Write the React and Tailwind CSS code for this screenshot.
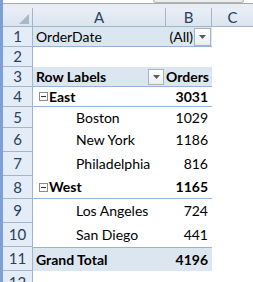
import React from "react";

const rowsData = [
  { n: 1, h: "h-[20px]", kind: "filter" },
  { n: 2, h: "h-[20px]", kind: "blank" },
  { n: 3, h: "h-[20px]", kind: "header" },
  { n: 4, h: "h-[20px]", kind: "group", label: "East", val: "3031" },
  { n: 5, h: "h-[21px]", kind: "item", label: "Boston", val: "1029" },
  { n: 6, h: "h-[24px]", kind: "item", label: "New York", val: "1186" },
  { n: 7, h: "h-[24px]", kind: "item", label: "Philadelphia", val: "816" },
  { n: 8, h: "h-[23px]", kind: "group", label: "West", val: "1165" },
  { n: 9, h: "h-[24px]", kind: "item", label: "Los Angeles", val: "724" },
  { n: 10, h: "h-[24px]", kind: "item", label: "San Diego", val: "441" },
  { n: 11, h: "h-[24px]", kind: "total", label: "Grand Total", val: "4196" },
  { n: 12, h: "h-[24px]", kind: "blank" },
];

function DropBtn({ className = "" }) {
  return (
    <div
      className={
        "flex items-center justify-center border border-[#a9b3bf] bg-gradient-to-b from-[#ffffff] to-[#e9edf2] " +
        className
      }
    >
      <svg width="7" height="4" viewBox="0 0 7 4">
        <path d="M0 0 L7 0 L3.5 4 Z" fill="#555b63" />
      </svg>
    </div>
  );
}

function Minus() {
  return (
    <div className="flex h-[9px] w-[9px] items-center justify-center border border-[#8c8c8c] bg-white">
      <div className="h-px w-[5px] bg-[#333]" />
    </div>
  );
}

function Row({ r }) {
  const fill =
    r.kind === "filter" || r.kind === "header" || r.kind === "total"
      ? "bg-[#dce6f1]"
      : "bg-white";
  let bottom = "";
  if (r.kind === "filter" || r.kind === "header" || r.kind === "group")
    bottom = "border-b border-[#95b3d7]";
  const top = r.kind === "total" ? "border-t border-[#95b3d7]" : "";

  let a = null;
  let b = null;
  if (r.kind === "filter") {
    a = <span className="pl-[3px]">OrderDate</span>;
    b = (
      <div className="flex h-full w-full items-center justify-end pr-[1px]">
        <span>(All)</span>
        <DropBtn className="ml-[1px] h-[18px] w-[17px]" />
      </div>
    );
  } else if (r.kind === "header") {
    a = (
      <div className="flex h-full w-full items-center justify-between pl-[3px] pr-[2px] font-bold">
        <span>Row Labels</span>
        <DropBtn className="h-[16px] w-[16px]" />
      </div>
    );
    b = <span className="ml-auto pr-[3px] font-bold">Orders</span>;
  } else if (r.kind === "group") {
    a = (
      <div className="flex h-full items-center pl-[6px] font-bold">
        <Minus />
        <span className="ml-[1px]">{r.label}</span>
      </div>
    );
    b = <span className="ml-auto pr-[4px] font-bold">{r.val}</span>;
  } else if (r.kind === "item") {
    a = <span className="pl-[43px]">{r.label}</span>;
    b = <span className="ml-auto pr-[4px]">{r.val}</span>;
  } else if (r.kind === "total") {
    a = <span className="pl-[3px] font-bold">{r.label}</span>;
    b = <span className="ml-auto pr-[4px] font-bold">{r.val}</span>;
  }

  return (
    <div className={"flex shrink-0 " + r.h}>
      <div className="flex w-[30px] shrink-0 items-center justify-center border-r border-b border-[#9eb6ce] bg-[#e4ecf7] text-[15px] text-[#27415f]">
        {r.n}
      </div>
      <div
        className={
          "flex w-[133px] shrink-0 items-center " + fill + " " + bottom + " " + top
        }
      >
        {a}
      </div>
      <div
        className={
          "flex w-[46px] shrink-0 items-center " + fill + " " + bottom + " " + top
        }
      >
        {b}
      </div>
      <div className="flex-1 bg-white" />
    </div>
  );
}

export default function App() {
  return (
    <div className="flex h-[282px] w-[253px] overflow-hidden bg-white font-['Lato','Liberation_Sans',sans-serif] text-[14px] leading-none text-black">
      <div className="w-[3px] shrink-0 bg-[#7d9fd3]" />
      <div className="flex min-w-0 flex-1 flex-col">
        <div className="flex h-[3px] shrink-0 bg-white">
          <div className="ml-[150px] h-[3px] w-[91px] rounded-b-[4px] border-x border-b border-[#b4b4b4] bg-[#ececec]" />
        </div>
        <div className="h-px shrink-0 bg-[#a7abb0]" />
        <div className="h-[4px] shrink-0 bg-[#e8edf4]" />
        <div className="flex h-[19px] shrink-0 border-b border-[#9eb6ce] bg-gradient-to-b from-[#e9eff7] to-[#dbe4ef] text-[15px] text-[#27415f]">
          <div className="relative w-[30px] shrink-0 border-r border-[#9eb6ce]">
            <svg
              className="absolute bottom-[2px] right-[3px]"
              width="10"
              height="10"
              viewBox="0 0 10 10"
            >
              <path d="M10 0 L10 10 L0 10 Z" fill="#a9b8c9" />
            </svg>
          </div>
          <div className="flex w-[133px] shrink-0 items-center justify-center border-r border-[#9eb6ce]">
            A
          </div>
          <div className="flex w-[46px] shrink-0 items-center justify-center border-r border-[#9eb6ce]">
            B
          </div>
          <div className="flex flex-1 items-center justify-center">C</div>
        </div>
        {rowsData.map((r) => (
          <Row key={r.n} r={r} />
        ))}
      </div>
    </div>
  );
}
